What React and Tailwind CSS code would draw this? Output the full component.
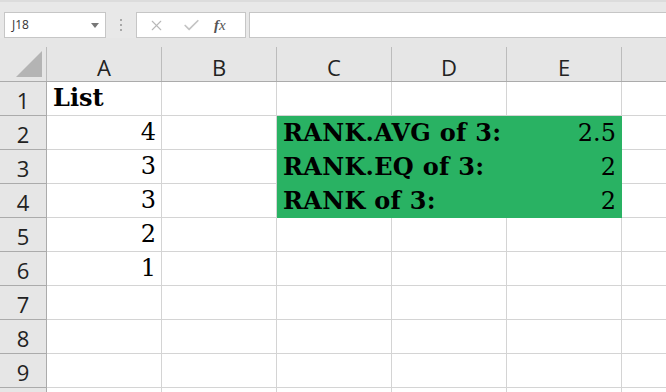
import { X, Check } from 'lucide-react';

const serif = { fontFamily: '"DejaVu Serif", "Liberation Serif", serif' };
const sans = { fontFamily: '"Open Sans", "Liberation Sans", sans-serif' };

const columns = ['A', 'B', 'C', 'D', 'E'];

const rankRows = [
  { label: 'RANK.AVG of 3:', value: '2.5' },
  { label: 'RANK.EQ of 3:', value: '2' },
  { label: 'RANK of 3:', value: '2' }
];

const listValues = { 2: '4', 3: '3', 4: '3', 5: '2', 6: '1' };

function Toolbar() {
  return (
    <div className="h-[38px] bg-[#e8e8e8] border-t-2 border-[#dcdcdc] flex items-end">
      <div className="ml-[4px] w-[102px] h-[26px] bg-white border border-[#c6c6c6] flex items-center justify-between pl-[7px] pr-[6px]">
        <span className="text-[12px] text-[#333]" style={sans}>J18</span>
        <svg width="8" height="5" viewBox="0 0 8 5">
          <path d="M0 0h8L4 5z" fill="#777" />
        </svg>
      </div>
      <div className="w-[30px] h-[26px] flex flex-col items-center justify-center gap-[3px]">
        <span className="w-[2px] h-[2px] bg-[#a8a8a8]" />
        <span className="w-[2px] h-[2px] bg-[#a8a8a8]" />
        <span className="w-[2px] h-[2px] bg-[#a8a8a8]" />
      </div>
      <div className="w-[110px] h-[26px] bg-white border border-[#c6c6c6] flex items-center pl-[11px]">
        <X size={17} strokeWidth={1.6} className="text-[#b8b8b8]" />
        <Check size={19} strokeWidth={2.2} className="ml-[17px] text-[#c4c4c4]" />
        <span className="ml-[13px] text-[15px] italic text-[#555]" style={{ fontFamily: '"Liberation Serif", serif' }}>
          <span className="font-bold">f</span>x
        </span>
      </div>
      <div className="ml-[3px] flex-1 h-[26px] bg-white border border-r-0 border-[#c6c6c6]" />
    </div>
  );
}

function HeaderRow() {
  return (
    <div className="h-[44px] bg-[#e6e6e6] border-b border-[#ababab] flex items-end">
      <div className="w-[47px] h-[34px] border-r border-[#bcbcbc] flex items-end justify-end pb-[4px] pr-[4px]">
        <svg width="26" height="26" viewBox="0 0 26 26">
          <path d="M26 0v26H0z" fill="#b4b4b4" />
        </svg>
      </div>
      {columns.map((c) => (
        <div
          key={c}
          className="w-[115px] h-[34px] border-r border-[#bcbcbc] flex items-end justify-center pb-[3px] text-[22px] leading-none text-[#222]"
          style={sans}
        >
          {c}
        </div>
      ))}
      <div className="flex-1 h-[34px]" />
    </div>
  );
}

function RowHeader({ n }) {
  return (
    <div
      className="w-[47px] h-full bg-[#e6e6e6] border-r border-b border-[#ababab] flex items-end justify-center pb-[4px] text-[22px] leading-none text-[#222]"
      style={sans}
    >
      {n}
    </div>
  );
}

function Cell({ className = '', children, style }) {
  return (
    <div className={`w-[115px] h-full border-r border-b border-[#d4d4d4] flex items-end ${className}`} style={style}>
      {children}
    </div>
  );
}

function DataRow({ n }) {
  const rank = rankRows[n - 2];

  return (
    <div className="h-[34px] flex">
      {/* row 10 only peeks in at the bottom edge, its number is not visible */}
      <RowHeader n={n < 10 ? n : ''} />
      {n === 1 ? (
        <Cell className="pl-[6px] pb-[5px] text-[24px] font-bold leading-none text-black" style={serif}>
          List
        </Cell>
      ) : (
        <Cell className="justify-end pr-[5px] pb-[5px] text-[24px] leading-none text-black" style={serif}>
          {listValues[n]}
        </Cell>
      )}
      <Cell />
      {rank ? (
        <div
          className="w-[345px] h-full bg-[#29b263] flex items-end justify-between pl-[6px] pr-[6px] pb-[5px] text-[24px] leading-none text-black"
          style={serif}
        >
          <span className="font-bold tracking-[0.3px]">{rank.label}</span>
          <span>{rank.value}</span>
        </div>
      ) : (
        <>
          <Cell />
          <Cell />
          <Cell />
        </>
      )}
      <div className="flex-1 h-full border-b border-[#d4d4d4]" />
    </div>
  );
}

export default function App() {
  return (
    <div className="w-[666px] h-[392px] overflow-hidden bg-white">
      <Toolbar />
      <HeaderRow />
      {[1, 2, 3, 4, 5, 6, 7, 8, 9, 10].map((n) => (
        <DataRow key={n} n={n} />
      ))}
    </div>
  );
}
